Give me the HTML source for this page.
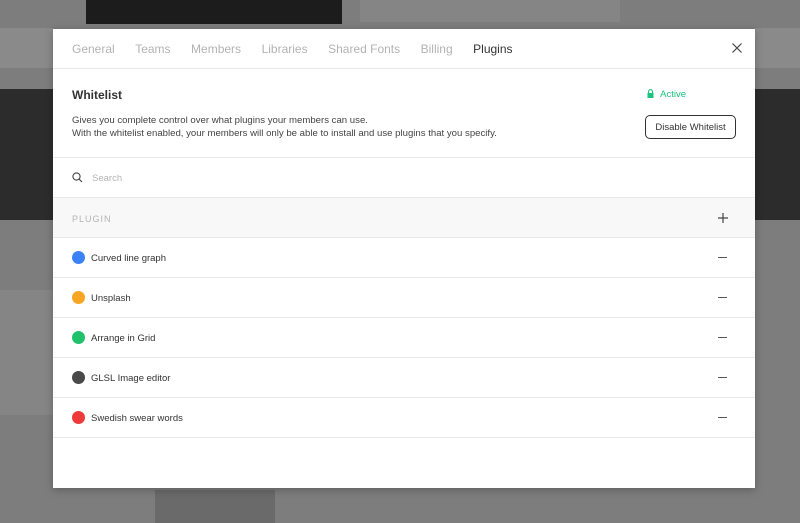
<!DOCTYPE html>
<html><head><style>
*{margin:0;padding:0;box-sizing:border-box}
body{width:800px;height:523px;overflow:hidden;background:#7d7d7d;font-family:"Liberation Sans",sans-serif;position:relative}
.bg{position:absolute}
.m{position:absolute;left:53px;top:29px;width:702px;height:459px;background:#fff;box-shadow:0 2px 8px rgba(0,0,0,.25)}
.tabs{height:40px;border-bottom:1px solid #e8e8e8;display:flex;align-items:center;padding-left:19px;font-size:12px;color:#b3b3b3;padding-top:1px}
.tabs span{margin-right:20.5px}
.tabs .a{color:#333}
.x{position:absolute;right:12px;top:13px}
.wl{height:89px;border-bottom:1px solid #e8e8e8;position:relative;padding:19px 19px}
.wl h3{font-size:12px;color:#333;font-weight:bold}
.wl p{font-size:9.6px;color:#444;line-height:13px;margin-top:12px}
.act{position:absolute;right:69px;top:20px;font-size:9.5px;color:#1bc47d}
.btn{position:absolute;right:19px;top:46px;width:91px;height:24px;border:1px solid #333;border-radius:5px;font-size:9.5px;color:#333;display:flex;align-items:center;justify-content:center}
.row{height:40px;border-bottom:1px solid #e8e8e8;display:flex;align-items:center;padding:0 19px;font-size:9.5px;line-height:12px;color:#333;position:relative}
.row span{position:relative;top:1px}
.dot{width:13px;height:13px;border-radius:50%;margin-right:6px}
.minus{position:absolute;right:28px;top:19px;width:9px;height:1.2px;background:#555}
</style></head><body>
<div class="bg" style="left:86px;top:0;width:256px;height:24px;background:#1c1c1c"></div>
<div class="bg" style="left:360px;top:0;width:260px;height:22px;background:#858585"></div>
<div class="bg" style="left:0;top:89px;width:53px;height:131px;background:#2c2c2c"></div>
<div class="bg" style="left:755px;top:89px;width:45px;height:131px;background:#2c2c2c"></div>
<div class="bg" style="left:0;top:28px;width:53px;height:40px;background:#8a8a8a"></div>
<div class="bg" style="left:755px;top:28px;width:45px;height:40px;background:#8a8a8a"></div>
<div class="bg" style="left:0;top:290px;width:53px;height:125px;background:#858585"></div>
<div class="bg" style="left:155px;top:490px;width:120px;height:33px;background:#6a6a6a"></div>
<div class="m">
<div class="tabs"><span>General</span><span>Teams</span><span>Members</span><span>Libraries</span><span>Shared Fonts</span><span>Billing</span><span class="a">Plugins</span></div>
<svg class="x" width="12" height="12" viewBox="0 0 12 12"><path d="M1.5 1.5L10.5 10.5M10.5 1.5L1.5 10.5" stroke="#444" stroke-width="1.2"/></svg>
<div class="wl"><h3>Whitelist</h3><p>Gives you complete control over what plugins your members can use.<br>With the whitelist enabled, your members will only be able to install and use plugins that you specify.</p>
<div class="act"><svg width="7" height="9" viewBox="0 0 7 9" style="vertical-align:-1px;margin-right:6px"><path d="M1.5 4V2.7a2 2 0 0 1 4 0V4" stroke="#1bc47d" fill="none" stroke-width="1.1"/><rect x="0.5" y="4" width="6" height="5" fill="#1bc47d"/></svg>Active</div>
<div class="btn">Disable Whitelist</div></div>
<div class="row" style="color:#b3b3b3"><svg width="11" height="11" viewBox="0 0 11 11" style="margin-right:9px"><circle cx="4.5" cy="4.5" r="3.6" stroke="#444" fill="none" stroke-width="1.1"/><path d="M7.2 7.2L10 10" stroke="#444" stroke-width="1.1"/></svg><span>Search</span></div>
<div class="row" style="background:#f8f8f8;color:#b3b3b3;letter-spacing:1px;font-size:9px"><span>PLUGIN</span><svg style="position:absolute;right:27px;top:15px" width="10" height="10" viewBox="0 0 10 10"><path d="M5 0V10M0 5H10" stroke="#444" stroke-width="1.2"/></svg></div>
<div class="row"><div class="dot" style="background:#3b82f6"></div><span>Curved line graph</span><div class="minus"></div></div>
<div class="row"><div class="dot" style="background:#f6a623"></div><span>Unsplash</span><div class="minus"></div></div>
<div class="row"><div class="dot" style="background:#1fc16b"></div><span>Arrange in Grid</span><div class="minus"></div></div>
<div class="row"><div class="dot" style="background:#4a4a4a"></div><span>GLSL Image editor</span><div class="minus"></div></div>
<div class="row"><div class="dot" style="background:#ef3a3a"></div><span>Swedish swear words</span><div class="minus"></div></div>
</div>
</body></html>
